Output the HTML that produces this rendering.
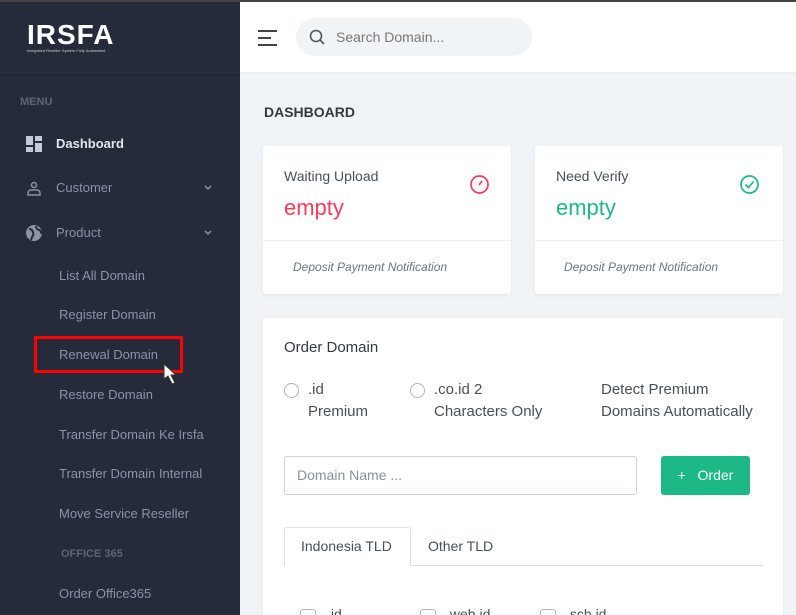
<!DOCTYPE html>
<html><head><meta charset="utf-8"><style>
*{box-sizing:border-box;margin:0;padding:0}
html,body{width:796px;height:615px;overflow:hidden}
body{background:#f1f4f7;font-family:"Liberation Sans",sans-serif;position:relative}
.abs{position:absolute}
.sb{left:0;top:0;width:240px;height:615px;background:#252b3b}
.top{left:0;top:0;width:796px;height:2px;background:#444}
.nav{color:#8b93a8;font-size:13px}
.sub{left:59px;font-size:13px;color:#8b93a8}
.hdr{left:240px;top:2px;width:556px;height:70px;background:#fff;box-shadow:0 1px 2px rgba(0,0,0,.05)}
.card{background:#fff;border-radius:3px;box-shadow:0 1px 3px rgba(0,0,0,.06)}
.t{color:#495057}
</style></head><body>
<div class="abs sb"></div>
<div class="abs top"></div>
<div class="abs" style="left:27px;top:22px;color:#fff;font-weight:bold;font-size:28px;letter-spacing:1px;line-height:26px">IRSFA</div>
<div class="abs" style="left:27px;top:48px;color:#ccc;font-size:4px;width:95px;white-space:nowrap">Integrated Reseller System Fully Automated</div>
<div class="abs" style="left:0;top:72px;width:240px;height:1px;background:#2b3142"></div>
<div class="abs" style="left:20px;top:96px;font-size:11px;font-weight:bold;color:#5c6477">MENU</div>
<svg class="abs" style="left:26px;top:136px" width="16" height="16"><rect x="0" y="0" width="7" height="9" fill="#c5cad6"/><rect x="9" y="0" width="7" height="5" fill="#c5cad6"/><rect x="0" y="11" width="7" height="5" fill="#c5cad6"/><rect x="9" y="7" width="7" height="9" fill="#c5cad6"/></svg>
<div class="abs" style="left:56px;top:136px;font-size:13px;font-weight:bold;color:#e3e6ed">Dashboard</div>
<svg class="abs" style="left:26px;top:180px" width="16" height="16" fill="none" stroke="#8b93a8" stroke-width="1.5"><circle cx="8" cy="5" r="2.5"/><path d="M2 15v-2a3 3 0 0 1 3-3h6a3 3 0 0 1 3 3v2z"/></svg>
<div class="abs nav" style="left:56px;top:180px">Customer</div>
<svg class="abs" style="left:203px;top:184px" width="10" height="8" fill="none" stroke="#8b93a8" stroke-width="1.5"><path d="M2 2l3 3 3-3"/></svg>
<svg class="abs" style="left:25px;top:224px" width="18" height="18"><circle cx="9" cy="9" r="8" fill="#8b93a8"/><path d="M4 5q3 0 4 3t-1 5l-1 3M11 2q0 3 3 4t2 4" stroke="#252b3b" stroke-width="2" fill="none"/></svg>
<div class="abs nav" style="left:56px;top:225px">Product</div>
<svg class="abs" style="left:203px;top:229px" width="10" height="8" fill="none" stroke="#8b93a8" stroke-width="1.5"><path d="M2 2l3 3 3-3"/></svg>
<div class="abs sub" style="top:268px">List All Domain</div>
<div class="abs sub" style="top:307px">Register Domain</div>
<div class="abs sub" style="top:347px">Renewal Domain</div>
<div class="abs" style="left:34px;top:336px;width:149px;height:37px;border:3px solid #f00"></div>
<svg class="abs" style="left:162px;top:362px" width="18" height="26"><path d="M2 2l0 15 4-3 4 8 3-1-4-8 5 0z" fill="#fff" stroke="#333" stroke-width="1"/></svg>
<div class="abs sub" style="top:387px">Restore Domain</div>
<div class="abs sub" style="top:427px">Transfer Domain Ke Irsfa</div>
<div class="abs sub" style="top:466px">Transfer Domain Internal</div>
<div class="abs sub" style="top:506px">Move Service Reseller</div>
<div class="abs" style="left:61px;top:548px;font-size:11px;font-weight:bold;color:#5c6477">OFFICE 365</div>
<div class="abs sub" style="top:586px">Order Office365</div>

<div class="abs hdr"></div>
<div class="abs" style="left:258px;top:30px;width:19px;height:2px;background:#444"></div>
<div class="abs" style="left:258px;top:37px;width:13px;height:2px;background:#444"></div>
<div class="abs" style="left:258px;top:44px;width:19px;height:2px;background:#444"></div>
<div class="abs" style="left:296px;top:18px;width:236px;height:38px;border-radius:19px;background:#f1f4f7"></div>
<svg class="abs" style="left:309px;top:29px" width="16" height="16" fill="none" stroke="#555" stroke-width="1.6"><circle cx="7" cy="7" r="5.5"/><path d="M11 11l4 4"/></svg>
<div class="abs" style="left:336px;top:29px;font-size:14px;color:#777">Search Domain...</div>

<div class="abs" style="left:264px;top:104px;font-size:14px;font-weight:bold;color:#343a40">DASHBOARD</div>

<div class="abs card" style="left:263px;top:146px;width:248px;height:148px"></div>
<div class="abs" style="left:263px;top:240px;width:248px;height:1px;background:#eceef1"></div>
<div class="abs t" style="left:284px;top:168px;font-size:14px">Waiting Upload</div>
<div class="abs" style="left:284px;top:195px;font-size:22px;color:#f73c5c">empty</div>
<svg class="abs" style="left:469px;top:174px" width="21" height="21" fill="none" stroke="#f73c5c" stroke-width="1.7"><circle cx="10.5" cy="10.5" r="8.5"/><path d="M10 11l3-4"/></svg>
<div class="abs" style="left:293px;top:260px;font-size:12px;font-style:italic;color:#6c757d">Deposit Payment Notification</div>

<div class="abs card" style="left:535px;top:146px;width:248px;height:148px"></div>
<div class="abs" style="left:535px;top:240px;width:248px;height:1px;background:#eceef1"></div>
<div class="abs t" style="left:556px;top:168px;font-size:14px">Need Verify</div>
<div class="abs" style="left:556px;top:195px;font-size:22px;color:#1cb987">empty</div>
<svg class="abs" style="left:739px;top:174px" width="21" height="21" fill="none" stroke="#1cb987" stroke-width="1.7"><circle cx="10.5" cy="10.5" r="8.5"/><path d="M6.5 10.5l3 3 5-6"/></svg>
<div class="abs" style="left:564px;top:260px;font-size:12px;font-style:italic;color:#6c757d">Deposit Payment Notification</div>

<div class="abs card" style="left:263px;top:318px;width:520px;height:297px;border-radius:3px 3px 0 0"></div>
<div class="abs" style="left:284px;top:339px;font-size:15px;color:#343a40">Order Domain</div>
<div class="abs" style="left:284px;top:383px;width:15px;height:15px;border:1px solid #adb5bd;border-radius:50%"></div>
<div class="abs t" style="left:308px;top:379px;font-size:15px;line-height:22px">.id<br>Premium</div>
<div class="abs" style="left:410px;top:383px;width:15px;height:15px;border:1px solid #adb5bd;border-radius:50%"></div>
<div class="abs t" style="left:434px;top:379px;font-size:15px;line-height:22px">.co.id 2<br>Characters Only</div>
<div class="abs t" style="left:601px;top:379px;font-size:15px;line-height:22px">Detect Premium<br>Domains Automatically</div>
<div class="abs" style="left:284px;top:456px;width:353px;height:39px;border:1px solid #ced4da;border-radius:3px"></div>
<div class="abs" style="left:297px;top:467px;font-size:14px;color:#8a9096">Domain Name ...</div>
<div class="abs" style="left:661px;top:456px;width:89px;height:39px;background:#1cb987;border-radius:3px;color:#fff;font-size:14px;line-height:39px;text-align:center">+&nbsp;&nbsp;&nbsp;Order</div>
<div class="abs" style="left:284px;top:565px;width:479px;height:1px;background:#dee2e6"></div>
<div class="abs" style="left:284px;top:527px;width:127px;height:39px;border:1px solid #dee2e6;border-bottom:none;border-radius:3px 3px 0 0;background:#fff"></div>
<div class="abs t" style="left:301px;top:538px;font-size:14px">Indonesia TLD</div>
<div class="abs t" style="left:428px;top:538px;font-size:14px">Other TLD</div>
<div class="abs" style="left:300px;top:609px;width:16px;height:16px;border:1px solid #adb5bd;border-radius:3px"></div>
<div class="abs t" style="left:327px;top:606px;font-size:14px">.id</div>
<div class="abs" style="left:420px;top:609px;width:16px;height:16px;border:1px solid #adb5bd;border-radius:3px"></div>
<div class="abs t" style="left:446px;top:606px;font-size:14px">.web.id</div>
<div class="abs" style="left:540px;top:609px;width:16px;height:16px;border:1px solid #adb5bd;border-radius:3px"></div>
<div class="abs t" style="left:566px;top:606px;font-size:14px">.sch.id</div>
</body></html>
